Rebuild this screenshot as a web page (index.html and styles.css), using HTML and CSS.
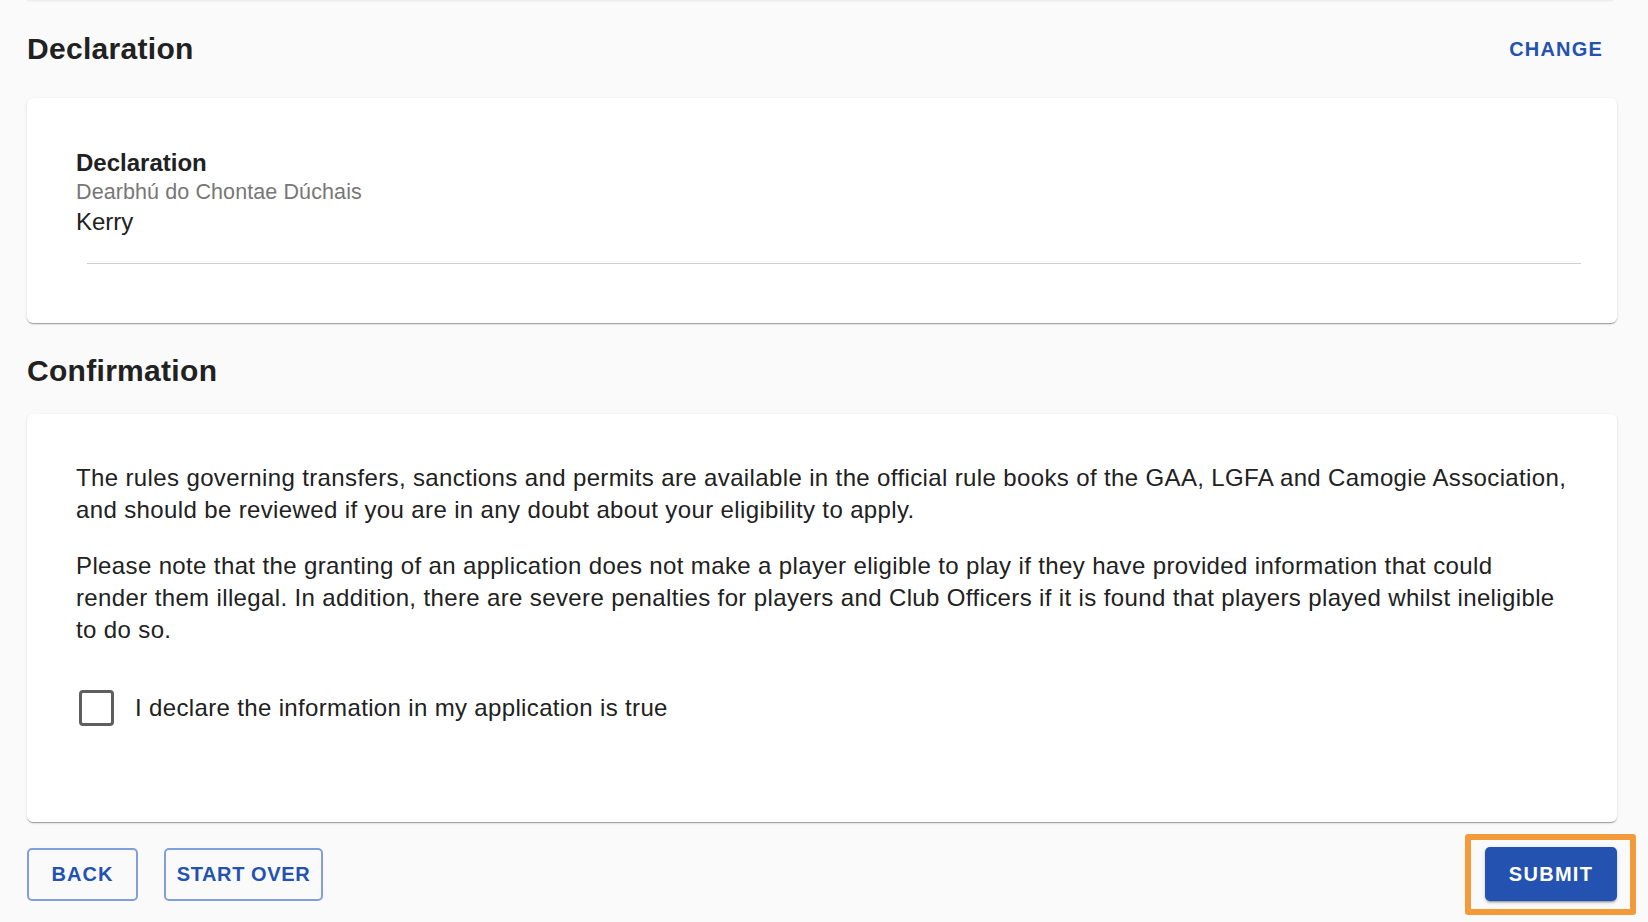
FILE: index.html
```html
<!DOCTYPE html>
<html lang="en">
<head>
<meta charset="utf-8">
<title>Declaration</title>
<link rel="stylesheet" href="styles.css">
</head>
<body>
<div class="page">
  <div class="prev-edge"></div>
  <div class="section-head">
    <h2 class="section-title">Declaration</h2>
    <button class="text-btn" type="button">CHANGE</button>
  </div>
  <div class="card card-decl">
    <div class="field-label">Declaration</div>
    <div class="field-sub">Dearbhú do Chontae Dúchais</div>
    <div class="field-value">Kerry</div>
    <div class="divider"></div>
  </div>

  <div class="section-head section-head-2">
    <h2 class="section-title">Confirmation</h2>
  </div>
  <div class="card card-confirm">
    <p class="para">The rules governing transfers, sanctions and permits are available in the official rule books of the GAA, LGFA and Camogie Association,<br>and should be reviewed if you are in any doubt about your eligibility to apply.</p>
    <p class="para">Please note that the granting of an application does not make a player eligible to play if they have provided information that could<br>render them illegal. In addition, there are severe penalties for players and Club Officers if it is found that players played whilst ineligible<br>to do so.</p>
    <label class="check-row">
      <span class="checkbox"></span>
      <span class="check-label">I declare the information in my application is true</span>
    </label>
  </div>

  <div class="actions">
    <div class="actions-left">
      <button class="outline-btn btn-back" type="button">BACK</button>
      <button class="outline-btn btn-over" type="button">START OVER</button>
    </div>
    <div class="submit-wrap">
      <button class="submit-btn" type="button">SUBMIT</button>
    </div>
  </div>
</div>
</body>
</html>
```
FILE: styles.css
```css
* { box-sizing: border-box; }

html, body {
  margin: 0;
  padding: 0;
  background: #fafafa;
}

body {
  font-family: "Liberation Sans", Arial, Helvetica, sans-serif;
  color: #212121;
}

.page {
  padding: 0 31px 0 27px;
  height: 922px;
  overflow: hidden;
}

.prev-edge {
  height: 2px;
  margin-right: 4px;
  background: linear-gradient(#ececec, #f7f7f7);
}

.section-head {
  display: flex;
  justify-content: space-between;
  align-items: center;
  height: 36px;
  margin-top: 29px;
  margin-bottom: 31px;
}

.section-head-2 {
  margin-top: 30px;
  margin-bottom: 25px;
}

.section-title {
  margin: 0;
  font-size: 30px;
  line-height: 36px;
  font-weight: 700;
  letter-spacing: 0.3px;
  color: #212121;
}

.text-btn {
  border: 0;
  background: none;
  padding: 0 14px;
  font-family: inherit;
  font-size: 20px;
  line-height: 36px;
  font-weight: 700;
  letter-spacing: 1.2px;
  color: #2352b0;
}

.card {
  background: #fff;
  border-radius: 6px;
  box-shadow: 0 2px 1px -1px rgba(0,0,0,0.2), 0 1px 1px 0 rgba(0,0,0,0.14), 0 1px 3px 0 rgba(0,0,0,0.12);
}

.card-decl {
  padding: 50px 25px 59px 49px;
}

.field-label {
  font-size: 24px;
  line-height: 30px;
  font-weight: 700;
  color: #212121;
}

.field-sub {
  font-size: 21.5px;
  line-height: 29px;
  letter-spacing: 0.1px;
  color: #777;
}

.field-value {
  font-size: 24px;
  line-height: 30px;
  color: #212121;
}

.divider {
  height: 1px;
  margin: 26px 11px 0 11px;
  background: #cfcfcf;
}

.card-confirm {
  padding: 48px 20px 96px 49px;
}

.para {
  margin: 0 0 24px 0;
  font-size: 24px;
  line-height: 32px;
  letter-spacing: 0.37px;
  color: #212121;
  white-space: nowrap;
}

.para:last-of-type {
  margin-bottom: 0;
}

.check-row {
  display: flex;
  align-items: center;
  gap: 21px;
  margin-top: 44px;
  padding-left: 3px;
}

.checkbox {
  width: 35px;
  height: 36px;
  border: 3.5px solid #5f5f5f;
  border-radius: 4px;
  flex: none;
}

.check-label {
  font-size: 24px;
  line-height: 32px;
  letter-spacing: 0.35px;
  color: #212121;
}

.actions {
  display: flex;
  justify-content: space-between;
  align-items: center;
  margin-top: 25px;
}

.actions-left {
  display: flex;
  gap: 26px;
}

.outline-btn {
  height: 53px;
  padding: 0;
  border: 2px solid #809fdb;
  border-radius: 5px;
  background: transparent;
  font-family: inherit;
  font-size: 20px;
  font-weight: 700;
  letter-spacing: 1px;
  color: #2352b0;
  white-space: nowrap;
  text-align: center;
}

.btn-back { width: 111px; }
.btn-over { width: 159px; letter-spacing: 0.6px; }

.submit-wrap {
  position: relative;
}

.submit-wrap::after {
  content: "";
  position: absolute;
  top: -13px;
  left: -20px;
  right: -19px;
  bottom: -14px;
  border: 6px solid #f39a3a;
  border-radius: 3px;
  pointer-events: none;
}

.submit-btn {
  display: block;
  width: 132px;
  height: 54px;
  border: 0;
  border-radius: 5px;
  background: #2352b0;
  color: #fff;
  font-family: inherit;
  font-size: 20px;
  font-weight: 700;
  letter-spacing: 1.3px;
  box-shadow: 0 3px 1px -2px rgba(0,0,0,0.2), 0 2px 2px 0 rgba(0,0,0,0.14), 0 1px 5px 0 rgba(0,0,0,0.12);
}
```
